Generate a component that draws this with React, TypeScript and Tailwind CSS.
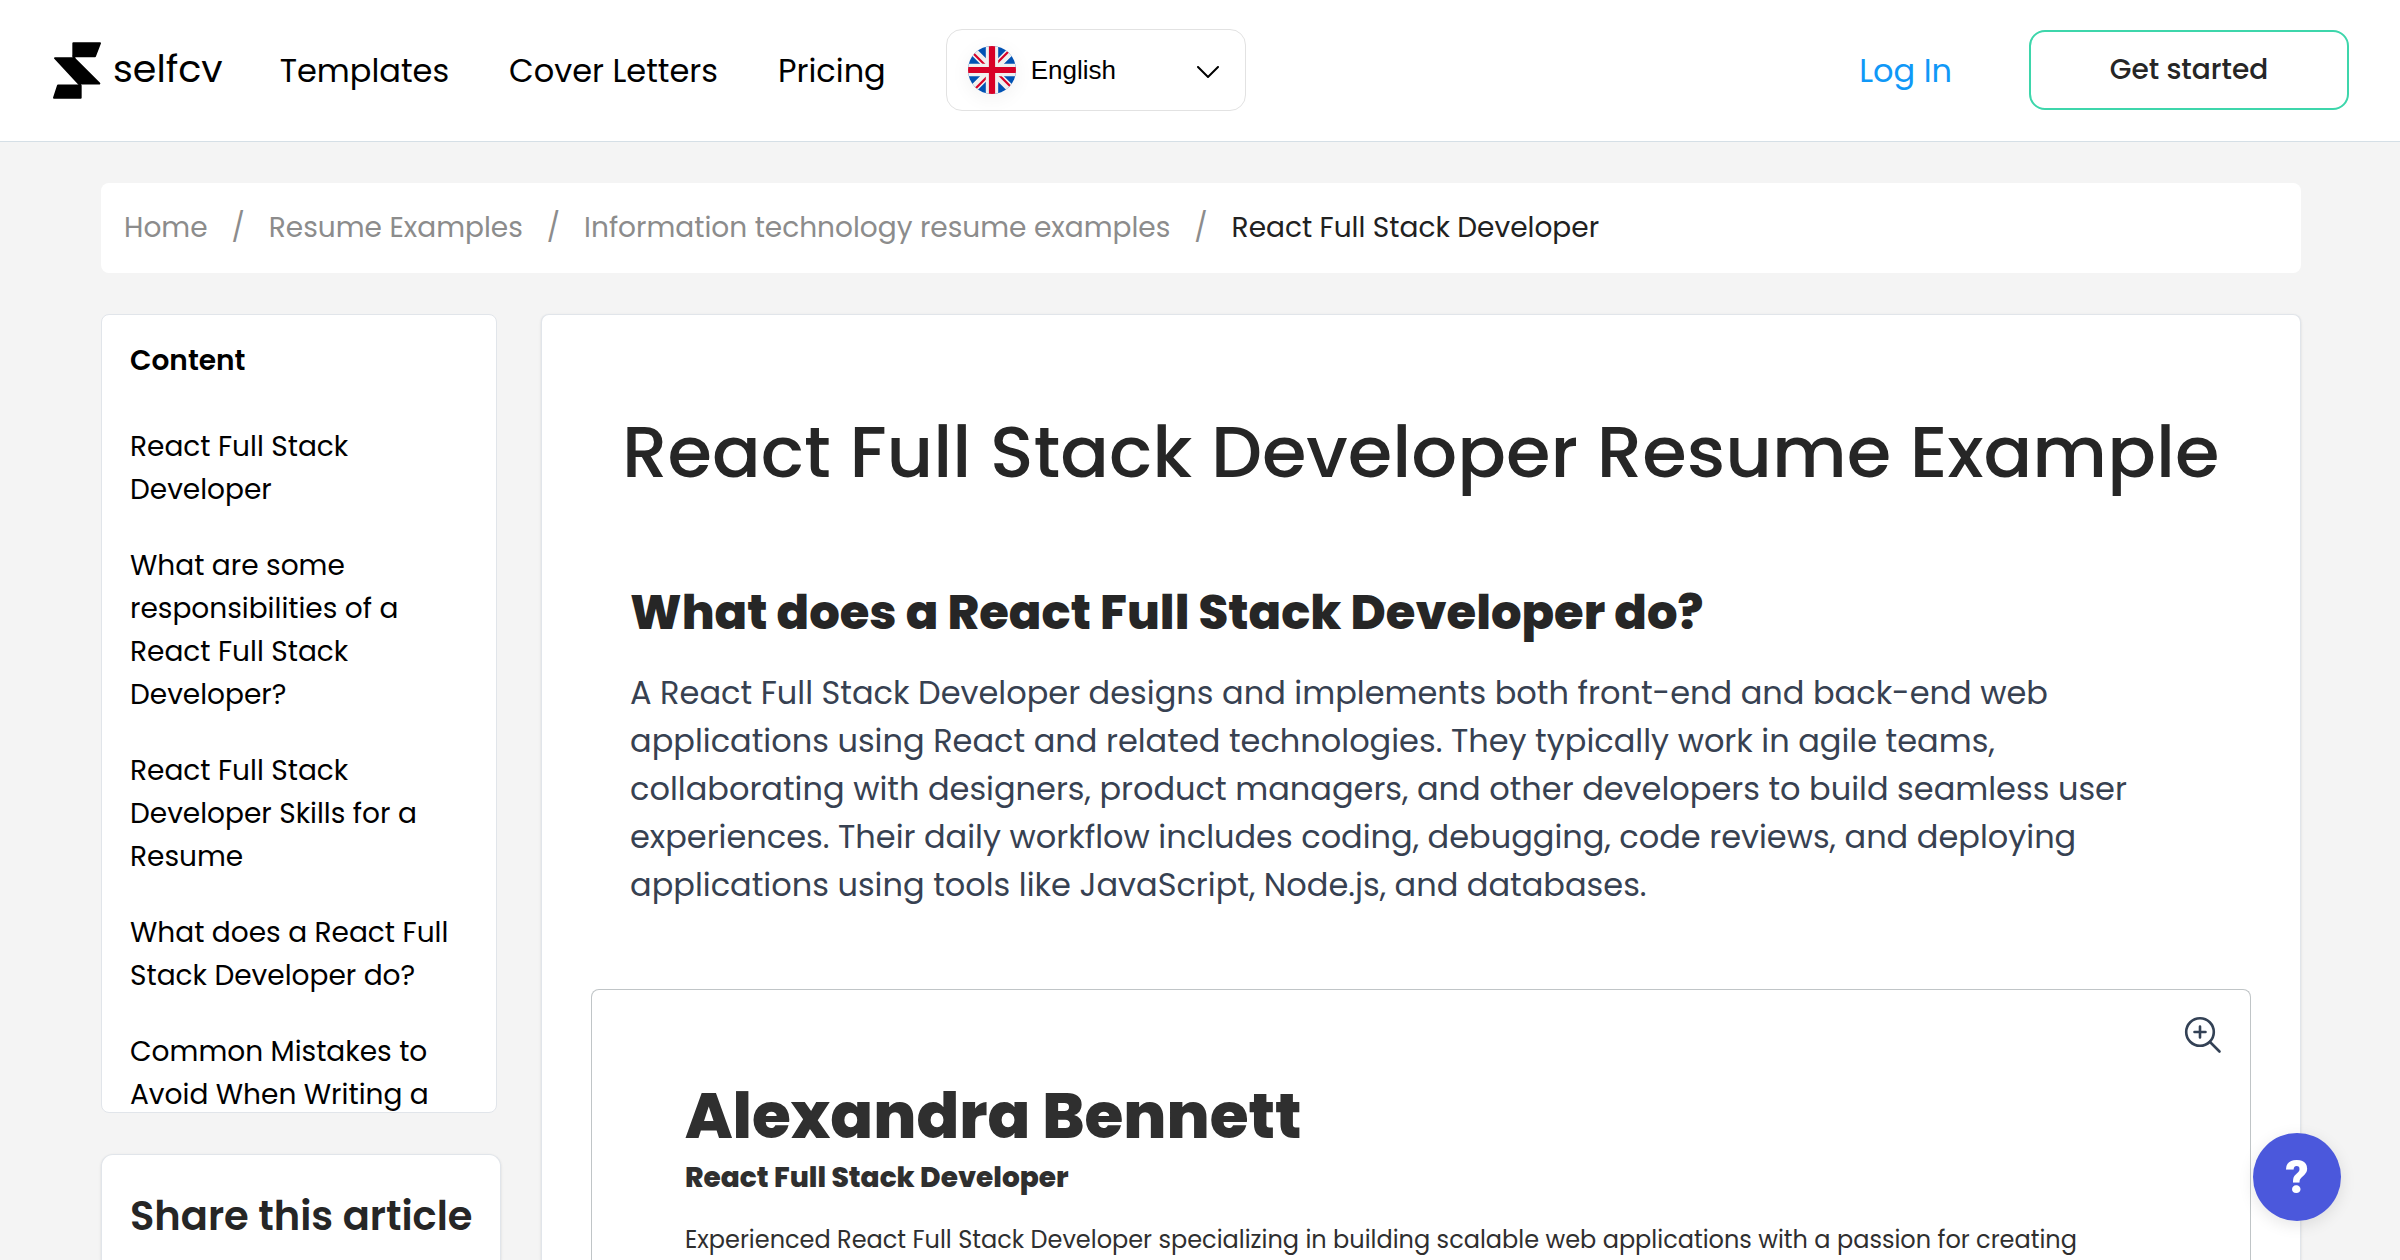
import { Fragment, useState } from "react";

const NAV_LINKS = ["Templates", "Cover Letters", "Pricing"];

const BREADCRUMBS = [
	"Home",
	"Resume Examples",
	"Information technology resume examples",
];

const CONTENT_LINKS = [
	"React Full Stack Developer",
	"What are some responsibilities of a React Full Stack Developer?",
	"React Full Stack Developer Skills for a Resume",
	"What does a React Full Stack Developer do?",
	"Common Mistakes to Avoid When Writing a",
];

function LogoMark() {
	return (
		<svg
			viewBox="39 33 144 170"
			className="h-[57px] w-[48px]"
			strokeWidth="6"
			strokeLinejoin="round"
			stroke="currentColor"
			fill="currentColor"
			aria-hidden="true"
		>
			<path d="M100 36H180L165 75H100Z" />
			<path d="M45 81H102L178 157H116Z" />
			<path d="M54 163H122V200H42Z" />
			<path d="M98 72h8v12h-8zM115 154h8v12h-8z" stroke="none" />
		</svg>
	);
}

function UkFlag() {
	return (
		<svg viewBox="0 0 48 48" className="size-12" aria-hidden="true">
			<clipPath id="flag-round">
				<circle cx="24" cy="24" r="24" />
			</clipPath>
			<g clipPath="url(#flag-round)">
				<path d="M0 0h48v48H0z" fill="#0052b4" />
				<path d="M0 0l48 48M48 0L0 48" stroke="#f0f0f0" strokeWidth="8" />
				<path
					d="M0 2l22 22M46 0L24 22M2 48l22-22M48 46L26 24"
					stroke="#d80027"
					strokeWidth="2.2"
				/>
				<path d="M24 0v48M0 24h48" stroke="#f0f0f0" strokeWidth="12.4" />
				<path d="M24 0v48M0 24h48" stroke="#d80027" strokeWidth="6.2" />
			</g>
		</svg>
	);
}

function LanguageSelect() {
	const [language, setLanguage] = useState("en");

	return (
		<div className="relative">
			<select
				aria-label="Language"
				value={language}
				onChange={(e) => setLanguage(e.target.value)}
				className="h-[82px] w-[300px] cursor-pointer appearance-none rounded-[16px] border border-[#e2e2e2] bg-white pl-[84px] font-['Liberation_Sans',sans-serif] text-[26px] text-black"
			>
				<option value="en">English</option>
			</select>
			<span className="pointer-events-none absolute top-[17px] left-[22px] rounded-full shadow-[0_4px_20px_rgba(0,0,0,0.06)]">
				<UkFlag />
			</span>
			<svg
				viewBox="0 0 22 12"
				className="pointer-events-none absolute top-[37px] right-[27px] h-3 w-[22px]"
				fill="none"
				stroke="black"
				strokeWidth="2"
				strokeLinecap="round"
				aria-hidden="true"
			>
				<path d="M1 1l10 10L21 1" />
			</svg>
		</div>
	);
}

function Header() {
	return (
		<header className="flex h-[142px] shrink-0 items-center border-b border-[#d5dfe6] bg-white pr-[51px] pb-px pl-[53px] text-[32px] text-black">
			<a href="#" className="flex items-center gap-3">
				<LogoMark />
				<span className="pb-[2px] text-[38px] leading-[48px]">selfcv</span>
			</a>
			<nav className="ml-[57px] flex items-center gap-[60px]">
				{NAV_LINKS.map((label) => (
					<a key={label} href="#" className="pt-[2px] whitespace-nowrap">
						{label}
					</a>
				))}
				<LanguageSelect />
			</nav>
			<a href="#" className="ml-auto pt-[2px] whitespace-nowrap text-[#1098f7]">
				Log In
			</a>
			<button
				type="button"
				className="ml-[77px] h-20 w-80 cursor-pointer rounded-[16px] border-2 border-[#3dd6ab] bg-white text-[28px] font-medium text-[#262626]"
			>
				Get started
			</button>
		</header>
	);
}

function Breadcrumb() {
	return (
		<nav
			aria-label="Breadcrumb"
			className="flex h-[90px] shrink-0 items-center gap-6 rounded-lg bg-white px-[23px] text-[28px] text-[#8c8c8c]"
		>
			{BREADCRUMBS.map((label) => (
				<Fragment key={label}>
					<a href="#">{label}</a>
					<span aria-hidden="true">/</span>
				</Fragment>
			))}
			<span aria-current="page" className="text-[#212121]">
				React Full Stack Developer
			</span>
		</nav>
	);
}

function Sidebar() {
	return (
		<aside className="flex w-[400px] shrink-0 flex-col gap-[41px]">
			<section className="mr-1 h-[799px] shrink-0 overflow-hidden rounded-lg border border-[#e1e5ea] bg-white px-7 pt-6 text-[28px] leading-[43px] text-black">
				<h2 className="font-semibold">Content</h2>
				<ul className="mt-[43px] flex flex-col gap-[33px]">
					{CONTENT_LINKS.map((label) => (
						<li key={label}>
							<a href="#">{label}</a>
						</li>
					))}
				</ul>
			</section>
			<section className="flex-1 rounded-t-xl border border-b-0 border-[#e1e5ea] bg-white px-7 pt-9 shadow-sm">
				<h2 className="text-[40px] leading-[50px] font-semibold whitespace-nowrap text-[#262626]">
					Share this article
				</h2>
			</section>
		</aside>
	);
}

function ResumePreview() {
	return (
		<section className="relative mx-[49px] mt-[80px] flex-1 rounded-t-lg border border-b-0 border-[#c0c5c7] bg-white px-[93px] pt-[86px] text-[#2f2f2f]">
			<button
				type="button"
				aria-label="Zoom in"
				className="absolute top-[26px] right-[28px] cursor-pointer text-[#334155]"
			>
				<svg
					viewBox="0 0 38 38"
					className="size-[38px]"
					fill="none"
					stroke="currentColor"
					strokeWidth="2.6"
					strokeLinecap="round"
					aria-hidden="true"
				>
					<circle cx="16" cy="16" r="13.8" />
					<path d="M26 26l9.5 9.5M16 10.5v11M10.5 16h11" />
				</svg>
			</button>
			<h3 className="text-[63px] leading-[80px] font-extrabold">
				Alexandra Bennett
			</h3>
			<p className="mt-1 text-[28px] leading-[36px] font-extrabold">
				React Full Stack Developer
			</p>
			<p className="mt-6 text-[24px] leading-[40px] whitespace-nowrap">
				Experienced React Full Stack Developer specializing in building scalable
				web applications with a passion for creating
			</p>
		</section>
	);
}

function Article() {
	return (
		<article className="flex min-w-0 flex-1 flex-col rounded-t-lg border border-b-0 border-[#e1e5ea] bg-white pt-[92px] shadow-sm">
			<h1 className="px-[80px] text-[72px] leading-[90px] font-medium whitespace-nowrap text-[#262626]">
				React Full Stack Developer Resume Example
			</h1>
			<h2 className="mt-[86px] px-[88px] text-[48px] leading-[60px] font-extrabold text-[#262626]">
				What does a React Full Stack Developer do?
			</h2>
			<p className="mt-[26px] px-[88px] text-[32px] leading-[48px] text-[#374151]">
				A React Full Stack Developer designs and implements both front-end and
				back-end web applications using React and related technologies. They
				typically work in agile teams, collaborating with designers, product
				managers, and other developers to build seamless user experiences. Their
				daily workflow includes coding, debugging, code reviews, and deploying
				applications using tools like JavaScript, Node.js, and databases.
			</p>
			<ResumePreview />
		</article>
	);
}

export default function App() {
	return (
		<div className="flex h-screen flex-col overflow-hidden bg-[#f4f4f4] font-['Poppins','Inter',sans-serif]">
			<Header />
			<main className="flex min-h-0 flex-1 flex-col gap-[41px] pt-[41px] pr-[99px] pl-[101px]">
				<Breadcrumb />
				<div className="flex min-h-0 flex-1 gap-10">
					<Sidebar />
					<Article />
				</div>
			</main>
			<button
				type="button"
				aria-label="Help"
				className="fixed right-[59px] bottom-[39px] size-[88px] cursor-pointer rounded-full bg-[#4b58dc] font-['Roboto',sans-serif] text-[46px] font-black text-white shadow-[0_4px_16px_rgba(0,0,0,0.1)]"
			>
				?
			</button>
		</div>
	);
}
